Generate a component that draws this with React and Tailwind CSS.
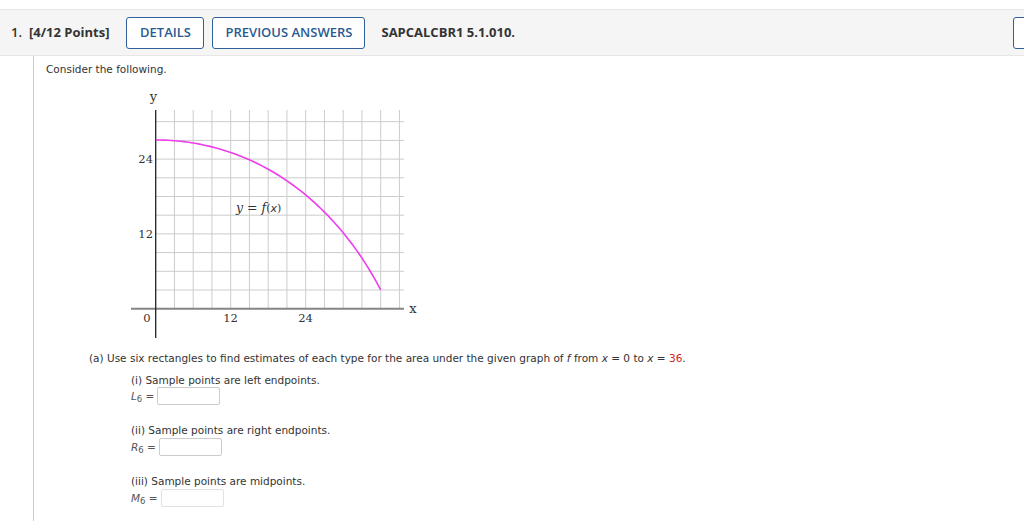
import React from "react";

const X0 = 155.7;
const Y0 = 308.7;
const U = 6.25;

const sx = (x) => X0 + x * U;
const sy = (y) => Y0 - y * U;

// curve y = f(x) on [0, 36], blend of two fitted shapes
const f = (x) => {
  const q = 27 - 0.01362 * x * x - 3.78e-6 * x ** 4;
  const e = 42.55 * Math.sqrt(Math.max(0, 1 - (x / 40) ** 2)) - 15.55;
  return (q + e) / 2;
};

const curvePath = () => {
  const pts = [];
  for (let i = 0; i <= 72; i++) {
    const x = i / 2;
    pts.push(`${sx(x).toFixed(2)},${sy(f(x)).toFixed(2)}`);
  }
  return "M" + pts.join(" L");
};

const Graph = () => {
  const vLines = [];
  for (let i = 1; i <= 13; i++) vLines.push(X0 + 18.75 * i);
  const hLines = [];
  for (let j = 1; j <= 10; j++) hLines.push(Y0 - 18.7 * j);

  return (
    <svg
      width="310"
      height="260"
      viewBox="120 85 310 260"
      className="block ml-[74px] mt-[9px]"
    >
      {vLines.map((x) => (
        <line key={"v" + x} x1={x} y1={110} x2={x} y2={Y0} stroke="#cccccc" strokeWidth="1" />
      ))}
      {hLines.map((y) => (
        <line key={"h" + y} x1={X0} y1={y} x2={404} y2={y} stroke="#cccccc" strokeWidth="1" />
      ))}
      <line x1={131} y1={Y0} x2={404} y2={Y0} stroke="#858585" strokeWidth="2" />
      <line x1={X0} y1={110} x2={X0} y2={338} stroke="#222" strokeWidth="1.3" />
      <path d={curvePath()} fill="none" stroke="#ee3cee" strokeWidth="1.6" />

      <g fontFamily="'DejaVu Serif', 'Liberation Serif', serif" fontSize="11.5" fill="#333">
        <text x={153.5} y={101} textAnchor="middle" fontSize="13">y</text>
        <text x={153} y={163} textAnchor="end">24</text>
        <text x={153} y={238} textAnchor="end">12</text>
        <text x={147} y={322} textAnchor="middle">0</text>
        <text x={230.5} y={322} textAnchor="middle">12</text>
        <text x={305.5} y={322} textAnchor="middle">24</text>
        <text x={413} y={313} textAnchor="middle" fontSize="13">x</text>
        <text x={236} y={212} fontSize="12.5">
          <tspan fontStyle="italic">y</tspan>
          <tspan> = </tspan>
          <tspan fontStyle="italic">f</tspan>
          <tspan fontSize="11">(</tspan>
          <tspan fontStyle="italic" fontSize="11" fontFamily="'DejaVu Sans', sans-serif">x</tspan>
          <tspan fontSize="11">)</tspan>
        </text>
      </g>
    </svg>
  );
};

const AnswerRow = ({ letter, inputLeft, faint }) => (
  <div className="flex items-center h-[18px]">
    <span className="text-[#555]">
      <i>{letter}</i>
      <sub className="text-[8.5px] not-italic">6</sub>
      <span> =</span>
    </span>
    <input
      type="text"
      className={
        "h-[18px] w-[63px] bg-white rounded-[2px] border " +
        (faint ? "border-[#e2e2e2]" : "border-[#cccccc]")
      }
      style={{ marginLeft: inputLeft }}
    />
  </div>
);

export default function App() {
  return (
    <div className="w-[1024px] h-[521px] overflow-hidden bg-white text-[#333]">
      <div className="h-[9px]" />
      <div
        className="h-[47px] flex items-center overflow-hidden bg-[#f5f5f5] border-t border-b border-[#e6e6e6] text-[13px] text-[#333]"
        style={{ fontFamily: "'Open Sans', 'Noto Sans', sans-serif" }}
      >
        <span className="ml-[11px] font-semibold">1.</span>
        <span className="ml-[7px] font-bold">[4/12 Points]</span>
        <button className="ml-[17px] h-[32px] w-[78px] rounded-[3px] border border-[#2f619b] bg-white text-[#2a5a90] font-semibold">
          DETAILS
        </button>
        <button className="ml-[8px] h-[32px] w-[153px] rounded-[3px] border border-[#2f619b] bg-white text-[#2a5a90] font-semibold">
          PREVIOUS ANSWERS
        </button>
        <span className="ml-[16px] font-bold">SAPCALCBR1 5.1.010.</span>
        <button className="ml-auto -mr-[40px] h-[32px] w-[51px] shrink-0 rounded-[3px] border border-[#2f619b] bg-white" />
      </div>

      <div className="flex h-[465px]">
        <div className="w-[34px] shrink-0 border-r border-[#cccccc]" />
        <div
          className="pl-[12px] text-[10.5px] leading-[14px]"
          style={{ fontFamily: "'DejaVu Sans', Verdana, sans-serif" }}
        >
          <p className="mt-[6px]">Consider the following.</p>
          <Graph />
          <div className="ml-[43px] mt-[6px]">
            <p>
              (a) Use six rectangles to find estimates of each type for the area under the given
              graph of <i>f</i> from <i>x</i> = 0 to <i>x</i> ={" "}
              <span className="text-[#cc1f1f]">36</span>.
            </p>
            <div className="ml-[42px]">
              <p className="mt-[8px]">(i) Sample points are left endpoints.</p>
              <AnswerRow letter="L" inputLeft={3} />
              <p className="mt-[18px]">(ii) Sample points are right endpoints.</p>
              <div className="mt-[1px]">
                <AnswerRow letter="R" inputLeft={3} />
              </div>
              <p className="mt-[18px]">(iii) Sample points are midpoints.</p>
              <div className="mt-[1px]">
                <AnswerRow letter="M" inputLeft={3} faint />
              </div>
            </div>
          </div>
        </div>
      </div>
    </div>
  );
}
